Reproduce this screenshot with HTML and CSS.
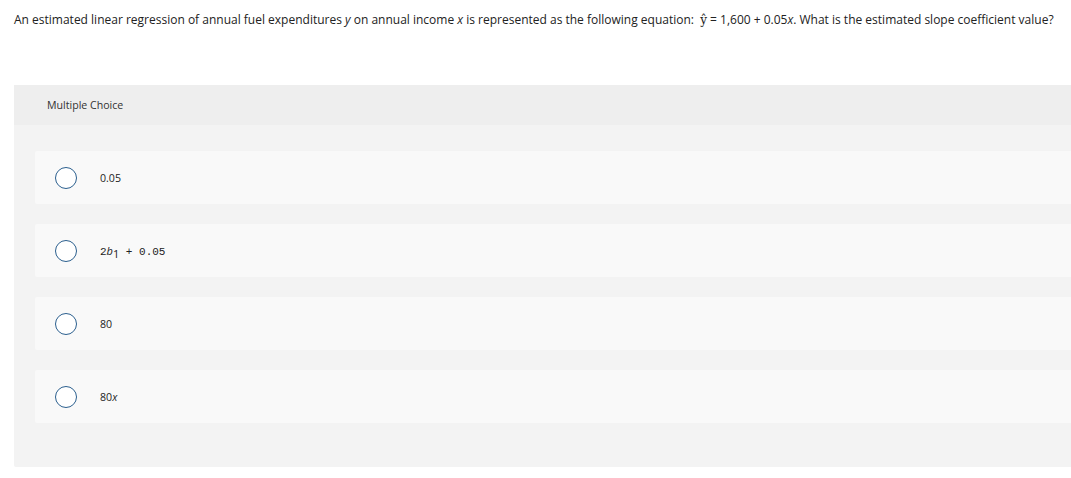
FILE: index.html
```html
<!DOCTYPE html>
<html>
<head>
<meta charset="utf-8">
<link rel="stylesheet" href="styles.css">
</head>
<body>
<p class="question">An estimated linear regression of annual fuel expenditures <i>y</i> on annual income <i>x</i> is represented as the following equation: &nbsp;<span class="yhat">ŷ</span> = 1,600 + 0.05<i>x</i>. What is the estimated slope coefficient value?</p>
<section class="panel">
  <div class="panel-head">Multiple Choice</div>
  <div class="choices">
    <label class="choice"><span class="radio"></span><span class="text">0.05</span></label>
    <label class="choice"><span class="radio"></span><span class="text mono">2<i>b</i><sub>1</sub> + 0.05</span></label>
    <label class="choice"><span class="radio"></span><span class="text">80</span></label>
    <label class="choice"><span class="radio"></span><span class="text">80<i>x</i></span></label>
  </div>
</section>
</body>
</html>
```
FILE: styles.css
```css
html, body {
  margin: 0;
  padding: 0;
  background: #ffffff;
  overflow: hidden;
}
body {
  font-family: "Open Sans", "Liberation Sans", sans-serif;
  color: #222;
}
.question {
  margin: 0;
  padding: 12px 0 0 14px;
  font-size: 12px;
  line-height: 15px;
  white-space: nowrap;
  height: 73px;
}
.yhat {
  font-family: "DejaVu Serif", serif;
}
.panel {
  margin-left: 14px;
  background: #f3f3f3;
  border-radius: 2px 0 0 2px;
}
.panel-head {
  height: 40px;
  display: flex;
  align-items: center;
  padding-left: 33px;
  background: #eeeeee;
  font-size: 10.6px;
  color: #333;
}
.choices {
  display: flex;
  flex-direction: column;
  gap: 20px;
  padding: 26px 0 44px 21px;
}
.choice {
  height: 53px;
  background: #f9f9f9;
  border-radius: 2px 0 0 2px;
  display: flex;
  align-items: center;
  padding-left: 20px;
}
.radio {
  width: 20px;
  height: 20px;
  border: 1.4px solid #2b5f8e;
  border-radius: 50%;
  background: #fff;
  flex: none;
}
.text {
  margin-left: 23px;
  font-size: 10.6px;
  color: #222;
}
.mono {
  font-family: "Liberation Mono", monospace;
  font-size: 11px;
}
.mono i {
  font-family: "Open Sans", sans-serif;
}
.mono sub {
  font-family: "Open Sans", sans-serif;
  font-size: 11px;
  vertical-align: -3px;
  line-height: 0;
}
```
